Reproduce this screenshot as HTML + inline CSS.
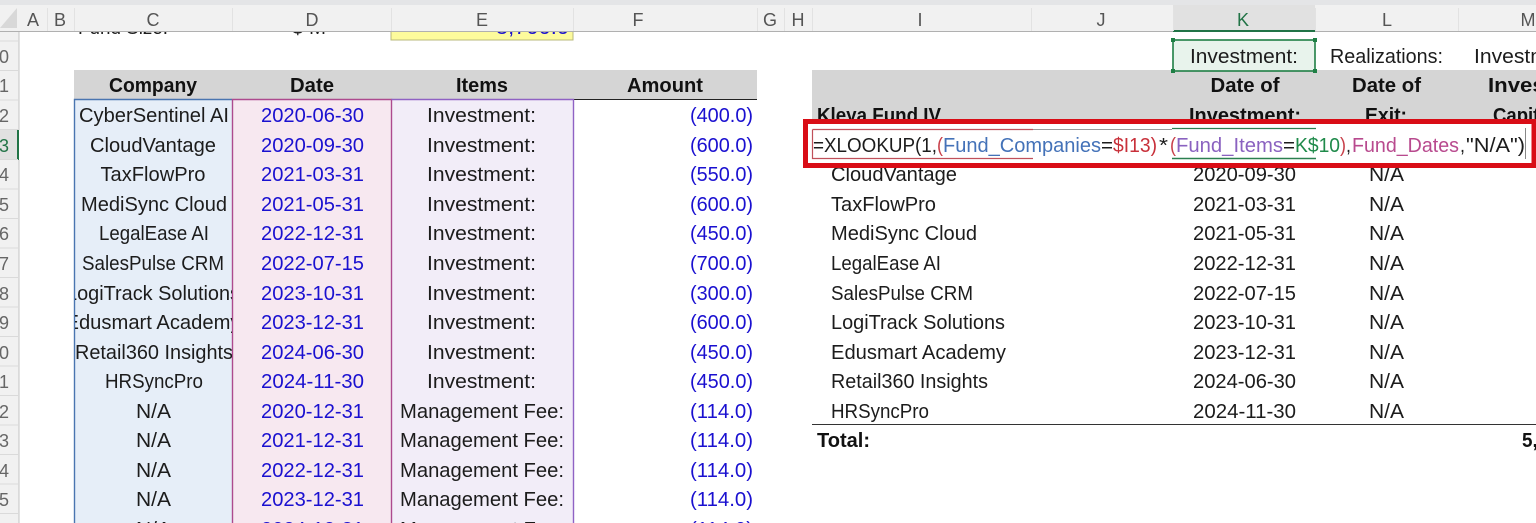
<!DOCTYPE html>
<html><head><meta charset="utf-8"><style>
html,body{margin:0;padding:0;background:#fff;overflow:hidden}
svg{display:block;filter:blur(.3px)}
text{font-family:"Liberation Sans",sans-serif;font-size:20px;fill:#1c1c1c}
.m{text-anchor:middle}.e{text-anchor:end}
.b{font-weight:bold;fill:#111}
.u{fill:#1a10d0}
.h{font-size:18px;fill:#555}
.r{fill:#666;font-size:18px}
</style></head><body>
<svg xmlns="http://www.w3.org/2000/svg" width="1536" height="523" viewBox="0 0 1536 523">
<defs><clipPath id="cc"><rect x="75" y="100" width="157" height="423"/></clipPath></defs>
<rect width="1536" height="523" fill="#fff"/>

<!-- partial row 9 -->
<text x="78" y="34" textLength="90" lengthAdjust="spacingAndGlyphs">Fund Size:</text>
<text x="292" y="34" textLength="34" lengthAdjust="spacingAndGlyphs">$ M</text>
<rect x="391" y="20" width="182" height="20" fill="#fdfb9c" stroke="#b9b97c"/>
<text class="e u" x="569" y="34" textLength="73" lengthAdjust="spacingAndGlyphs">5,700.0</text>

<!-- left table fills -->
<rect x="74" y="70" width="683" height="29" fill="#d5d5d5"/>
<rect x="74" y="99" width="158" height="424" fill="#e6eef8"/>
<rect x="232" y="99" width="159" height="424" fill="#f7e8f0"/>
<rect x="391" y="99" width="182" height="424" fill="#f2edf8"/>
<rect x="74" y="99" width="683" height="1" fill="#222"/>
<path d="M74.5 523V99.5H232" fill="none" stroke="#4a75b0" stroke-width="1.4"/>
<path d="M232.5 523V99.5H391.5V523" fill="none" stroke="#ad4a8e" stroke-width="1.4"/>
<path d="M391.5 99.5H573.5V523" fill="none" stroke="#8f62c4" stroke-width="1.4"/>

<text class="m b" x="153" y="92" textLength="88" lengthAdjust="spacingAndGlyphs">Company</text>
<text class="m b" x="312" y="92" textLength="44" lengthAdjust="spacingAndGlyphs">Date</text>
<text class="m b" x="482" y="92" textLength="52" lengthAdjust="spacingAndGlyphs">Items</text>
<text class="m b" x="665" y="92" textLength="76" lengthAdjust="spacingAndGlyphs">Amount</text>

<g clip-path="url(#cc)">
<text class="m" x="154" y="122" textLength="150" lengthAdjust="spacingAndGlyphs">CyberSentinel AI</text>
<text class="m" x="153" y="152" textLength="126" lengthAdjust="spacingAndGlyphs">CloudVantage</text>
<text class="m" x="153" y="181" textLength="105" lengthAdjust="spacingAndGlyphs">TaxFlowPro</text>
<text class="m" x="154" y="211" textLength="146" lengthAdjust="spacingAndGlyphs">MediSync Cloud</text>
<text class="m" x="154" y="240" textLength="110" lengthAdjust="spacingAndGlyphs">LegalEase AI</text>
<text class="m" x="153" y="270" textLength="142" lengthAdjust="spacingAndGlyphs">SalesPulse CRM</text>
<text class="m" x="153" y="300" textLength="174" lengthAdjust="spacingAndGlyphs">LogiTrack Solutions</text>
<text class="m" x="153" y="329" textLength="175" lengthAdjust="spacingAndGlyphs">Edusmart Academy</text>
<text class="m" x="154" y="359" textLength="158" lengthAdjust="spacingAndGlyphs">Retail360 Insights</text>
<text class="m" x="154" y="388" textLength="98" lengthAdjust="spacingAndGlyphs">HRSyncPro</text>
<text class="m" x="153.500" y="418" textLength="35" lengthAdjust="spacingAndGlyphs">N/A</text>
<text class="m" x="153.500" y="447" textLength="35" lengthAdjust="spacingAndGlyphs">N/A</text>
<text class="m" x="153.500" y="477" textLength="35" lengthAdjust="spacingAndGlyphs">N/A</text>
<text class="m" x="153.500" y="506" textLength="35" lengthAdjust="spacingAndGlyphs">N/A</text>
<text class="m" x="153.500" y="536" textLength="35" lengthAdjust="spacingAndGlyphs">N/A</text>
</g>

<g class="dates">
<text class="m u" x="312.500" y="122" textLength="103" lengthAdjust="spacingAndGlyphs">2020-06-30</text>
<text class="m u" x="312.500" y="152" textLength="103" lengthAdjust="spacingAndGlyphs">2020-09-30</text>
<text class="m u" x="312.500" y="181" textLength="103" lengthAdjust="spacingAndGlyphs">2021-03-31</text>
<text class="m u" x="312.500" y="211" textLength="103" lengthAdjust="spacingAndGlyphs">2021-05-31</text>
<text class="m u" x="312.500" y="240" textLength="103" lengthAdjust="spacingAndGlyphs">2022-12-31</text>
<text class="m u" x="312.500" y="270" textLength="103" lengthAdjust="spacingAndGlyphs">2022-07-15</text>
<text class="m u" x="312.500" y="300" textLength="103" lengthAdjust="spacingAndGlyphs">2023-10-31</text>
<text class="m u" x="312.500" y="329" textLength="103" lengthAdjust="spacingAndGlyphs">2023-12-31</text>
<text class="m u" x="312.500" y="359" textLength="103" lengthAdjust="spacingAndGlyphs">2024-06-30</text>
<text class="m u" x="312.500" y="388" textLength="103" lengthAdjust="spacingAndGlyphs">2024-11-30</text>
<text class="m u" x="312.500" y="418" textLength="103" lengthAdjust="spacingAndGlyphs">2020-12-31</text>
<text class="m u" x="312.500" y="447" textLength="103" lengthAdjust="spacingAndGlyphs">2021-12-31</text>
<text class="m u" x="312.500" y="477" textLength="103" lengthAdjust="spacingAndGlyphs">2022-12-31</text>
<text class="m u" x="312.500" y="506" textLength="103" lengthAdjust="spacingAndGlyphs">2023-12-31</text>
<text class="m u" x="312.500" y="536" textLength="103" lengthAdjust="spacingAndGlyphs">2024-12-31</text>
</g>

<g>
<text class="m" x="481.500" y="122" textLength="109" lengthAdjust="spacingAndGlyphs">Investment:</text>
<text class="m" x="481.500" y="152" textLength="109" lengthAdjust="spacingAndGlyphs">Investment:</text>
<text class="m" x="481.500" y="181" textLength="109" lengthAdjust="spacingAndGlyphs">Investment:</text>
<text class="m" x="481.500" y="211" textLength="109" lengthAdjust="spacingAndGlyphs">Investment:</text>
<text class="m" x="481.500" y="240" textLength="109" lengthAdjust="spacingAndGlyphs">Investment:</text>
<text class="m" x="481.500" y="270" textLength="109" lengthAdjust="spacingAndGlyphs">Investment:</text>
<text class="m" x="481.500" y="300" textLength="109" lengthAdjust="spacingAndGlyphs">Investment:</text>
<text class="m" x="481.500" y="329" textLength="109" lengthAdjust="spacingAndGlyphs">Investment:</text>
<text class="m" x="481.500" y="359" textLength="109" lengthAdjust="spacingAndGlyphs">Investment:</text>
<text class="m" x="481.500" y="388" textLength="109" lengthAdjust="spacingAndGlyphs">Investment:</text>
<text class="m" x="482" y="418" textLength="164" lengthAdjust="spacingAndGlyphs">Management Fee:</text>
<text class="m" x="482" y="447" textLength="164" lengthAdjust="spacingAndGlyphs">Management Fee:</text>
<text class="m" x="482" y="477" textLength="164" lengthAdjust="spacingAndGlyphs">Management Fee:</text>
<text class="m" x="482" y="506" textLength="164" lengthAdjust="spacingAndGlyphs">Management Fee:</text>
<text class="m" x="482" y="536" textLength="164" lengthAdjust="spacingAndGlyphs">Management Fee:</text>
</g>

<g>
<text class="e u" x="753" y="122" textLength="63" lengthAdjust="spacingAndGlyphs">(400.0)</text>
<text class="e u" x="753" y="152" textLength="63" lengthAdjust="spacingAndGlyphs">(600.0)</text>
<text class="e u" x="753" y="181" textLength="63" lengthAdjust="spacingAndGlyphs">(550.0)</text>
<text class="e u" x="753" y="211" textLength="63" lengthAdjust="spacingAndGlyphs">(600.0)</text>
<text class="e u" x="753" y="240" textLength="63" lengthAdjust="spacingAndGlyphs">(450.0)</text>
<text class="e u" x="753" y="270" textLength="63" lengthAdjust="spacingAndGlyphs">(700.0)</text>
<text class="e u" x="753" y="300" textLength="63" lengthAdjust="spacingAndGlyphs">(300.0)</text>
<text class="e u" x="753" y="329" textLength="63" lengthAdjust="spacingAndGlyphs">(600.0)</text>
<text class="e u" x="753" y="359" textLength="63" lengthAdjust="spacingAndGlyphs">(450.0)</text>
<text class="e u" x="753" y="388" textLength="63" lengthAdjust="spacingAndGlyphs">(450.0)</text>
<text class="e u" x="753" y="418" textLength="63" lengthAdjust="spacingAndGlyphs">(114.0)</text>
<text class="e u" x="753" y="447" textLength="63" lengthAdjust="spacingAndGlyphs">(114.0)</text>
<text class="e u" x="753" y="477" textLength="63" lengthAdjust="spacingAndGlyphs">(114.0)</text>
<text class="e u" x="753" y="506" textLength="63" lengthAdjust="spacingAndGlyphs">(114.0)</text>
<text class="e u" x="753" y="536" textLength="63" lengthAdjust="spacingAndGlyphs">(114.0)</text>
</g>

<!-- right table -->
<rect x="812" y="70" width="724" height="60" fill="#d5d5d5"/>
<rect x="1173" y="40" width="142" height="31" fill="#e8f3ec" stroke="#1f7f45" stroke-width="1.6"/>
<rect x="1171" y="38" width="4" height="4" fill="#1f7f45"/><rect x="1313" y="38" width="4" height="4" fill="#1f7f45"/>
<rect x="1171" y="69" width="4" height="4" fill="#1f7f45"/><rect x="1313" y="69" width="4" height="4" fill="#1f7f45"/>
<text class="m" x="1244" y="63" textLength="108" lengthAdjust="spacingAndGlyphs">Investment:</text>
<text x="1330" y="63" textLength="113" lengthAdjust="spacingAndGlyphs">Realizations:</text>
<text x="1474" y="63" textLength="109" lengthAdjust="spacingAndGlyphs">Investment:</text>

<text class="m b" x="1245" y="92" textLength="69" lengthAdjust="spacingAndGlyphs">Date of</text>
<text class="m b" x="1386.500" y="92" textLength="69" lengthAdjust="spacingAndGlyphs">Date of</text>
<text class="b" x="1488" y="92" textLength="90" lengthAdjust="spacingAndGlyphs">Invested</text>
<text class="b" x="817" y="122" textLength="124" lengthAdjust="spacingAndGlyphs">Kleya Fund IV</text>
<text class="m b" x="1245" y="122" textLength="112" lengthAdjust="spacingAndGlyphs">Investment:</text>
<text class="m b" x="1386" y="122" textLength="42" lengthAdjust="spacingAndGlyphs">Exit:</text>
<text class="b" x="1493" y="122" textLength="68" lengthAdjust="spacingAndGlyphs">Capital:</text>

<text x="831" y="181" textLength="126" lengthAdjust="spacingAndGlyphs">CloudVantage</text>
<text x="831" y="211" textLength="105" lengthAdjust="spacingAndGlyphs">TaxFlowPro</text>
<text x="831" y="240" textLength="146" lengthAdjust="spacingAndGlyphs">MediSync Cloud</text>
<text x="831" y="270" textLength="110" lengthAdjust="spacingAndGlyphs">LegalEase AI</text>
<text x="831" y="300" textLength="142" lengthAdjust="spacingAndGlyphs">SalesPulse CRM</text>
<text x="831" y="329" textLength="174" lengthAdjust="spacingAndGlyphs">LogiTrack Solutions</text>
<text x="831" y="359" textLength="175" lengthAdjust="spacingAndGlyphs">Edusmart Academy</text>
<text x="831" y="388" textLength="157" lengthAdjust="spacingAndGlyphs">Retail360 Insights</text>
<text x="831" y="418" textLength="98" lengthAdjust="spacingAndGlyphs">HRSyncPro</text>
<text class="m" x="1244.500" y="181" textLength="103" lengthAdjust="spacingAndGlyphs">2020-09-30</text>
<text class="m" x="1244.500" y="211" textLength="103" lengthAdjust="spacingAndGlyphs">2021-03-31</text>
<text class="m" x="1244.500" y="240" textLength="103" lengthAdjust="spacingAndGlyphs">2021-05-31</text>
<text class="m" x="1244.500" y="270" textLength="103" lengthAdjust="spacingAndGlyphs">2022-12-31</text>
<text class="m" x="1244.500" y="300" textLength="103" lengthAdjust="spacingAndGlyphs">2022-07-15</text>
<text class="m" x="1244.500" y="329" textLength="103" lengthAdjust="spacingAndGlyphs">2023-10-31</text>
<text class="m" x="1244.500" y="359" textLength="103" lengthAdjust="spacingAndGlyphs">2023-12-31</text>
<text class="m" x="1244.500" y="388" textLength="103" lengthAdjust="spacingAndGlyphs">2024-06-30</text>
<text class="m" x="1244.500" y="418" textLength="103" lengthAdjust="spacingAndGlyphs">2024-11-30</text>
<text class="m" x="1386.500" y="181" textLength="35" lengthAdjust="spacingAndGlyphs">N/A</text>
<text class="m" x="1386.500" y="211" textLength="35" lengthAdjust="spacingAndGlyphs">N/A</text>
<text class="m" x="1386.500" y="240" textLength="35" lengthAdjust="spacingAndGlyphs">N/A</text>
<text class="m" x="1386.500" y="270" textLength="35" lengthAdjust="spacingAndGlyphs">N/A</text>
<text class="m" x="1386.500" y="300" textLength="35" lengthAdjust="spacingAndGlyphs">N/A</text>
<text class="m" x="1386.500" y="329" textLength="35" lengthAdjust="spacingAndGlyphs">N/A</text>
<text class="m" x="1386.500" y="359" textLength="35" lengthAdjust="spacingAndGlyphs">N/A</text>
<text class="m" x="1386.500" y="388" textLength="35" lengthAdjust="spacingAndGlyphs">N/A</text>
<text class="m" x="1386.500" y="418" textLength="35" lengthAdjust="spacingAndGlyphs">N/A</text>
<rect x="812" y="424" width="724" height="1" fill="#333"/>
<text class="b" x="817" y="447" textLength="53" lengthAdjust="spacingAndGlyphs">Total:</text>
<text class="b" x="1522" y="447" textLength="63" lengthAdjust="spacingAndGlyphs">5,700.0</text>

<!-- formula box -->
<rect x="805.500" y="121.500" width="728.500" height="44" fill="#fff" stroke="#d90d16" stroke-width="5"/>
<path d="M812.500 129.500H1033M812.500 129.500V158.500H1033" fill="none" stroke="#c0505a" stroke-width="1.200"/>
<path d="M1033 129.500H1172" stroke="#999" stroke-width="1"/>
<path d="M1172 128.500H1316" stroke="#2b8050" stroke-width="1.200"/>
<path d="M1172 158.500H1316" stroke="#2b8050" stroke-width="1.400"/>
<path d="M1525.500 128V159" stroke="#888" stroke-width="1"/>
<text x="813" y="152" textLength="124" lengthAdjust="spacingAndGlyphs">=XLOOKUP(1,</text>
<text x="937" y="152" textLength="6" lengthAdjust="spacingAndGlyphs" style="fill:#c8404a">(</text>
<text x="943" y="152" textLength="158" lengthAdjust="spacingAndGlyphs" style="fill:#4472b8">Fund_Companies</text>
<text x="1101" y="152" textLength="12" lengthAdjust="spacingAndGlyphs">=</text>
<text x="1113" y="152" textLength="44" lengthAdjust="spacingAndGlyphs" style="fill:#c8303a">$I13)</text>
<text x="1159" y="152" textLength="9" lengthAdjust="spacingAndGlyphs">*</text>
<text x="1170" y="152" textLength="6" lengthAdjust="spacingAndGlyphs" style="fill:#c8404a">(</text>
<text x="1176" y="152" textLength="107" lengthAdjust="spacingAndGlyphs" style="fill:#8a62c0">Fund_Items</text>
<text x="1283" y="152" textLength="12" lengthAdjust="spacingAndGlyphs">=</text>
<text x="1295" y="152" textLength="45" lengthAdjust="spacingAndGlyphs" style="fill:#1f8a4a">K$10</text>
<text x="1340" y="152" textLength="6" lengthAdjust="spacingAndGlyphs" style="fill:#c8404a">)</text>
<text x="1346" y="152" textLength="5" lengthAdjust="spacingAndGlyphs">,</text>
<text x="1352" y="152" textLength="107" lengthAdjust="spacingAndGlyphs" style="fill:#b84a8e">Fund_Dates</text>
<text x="1460" y="152" textLength="5" lengthAdjust="spacingAndGlyphs">,</text>
<text x="1466" y="152" textLength="59" lengthAdjust="spacingAndGlyphs">"N/A")</text>

<!-- column header -->
<rect x="0" y="0" width="1536" height="5" fill="#e4e5e7"/>
<rect x="0" y="5" width="1536" height="26" fill="#f1f1f1"/>
<rect x="1173" y="5" width="142" height="26" fill="#e1e1e1"/>
<rect x="0" y="31" width="1536" height="1" fill="#b0b0b0"/>
<rect x="1173" y="30" width="142" height="2" fill="#217346"/>
<path d="M47.500 8V31M74.500 8V31M232.500 8V31M391.500 8V31M573.500 8V31M757.500 8V31M784.500 8V31M812.500 8V31M1031.500 8V31M1173.500 8V31M1315.500 8V31M1458.500 8V31" stroke="#e2e2e2" stroke-width="1"/>
<text class="m h" x="33" y="26">A</text><text class="m h" x="60" y="26">B</text>
<text class="m h" x="153" y="26">C</text><text class="m h" x="312" y="26">D</text>
<text class="m h" x="482" y="26">E</text><text class="m h" x="638" y="26">F</text>
<text class="m h" x="770" y="26">G</text><text class="m h" x="798" y="26">H</text>
<text class="m h" x="920" y="26">I</text><text class="m h" x="1101" y="26">J</text>
<text class="m h" x="1243" y="26" style="fill:#217346">K</text><text class="m h" x="1387" y="26">L</text>
<text class="m h" x="1528" y="26">M</text>
<path d="M0 28L17 8V28Z" fill="#d8d8d8"/>

<!-- row header -->
<rect x="0" y="32" width="19" height="491" fill="#f1f1f1"/>
<rect x="0" y="130" width="18" height="30" fill="#e1e1e1"/>
<rect x="17" y="130" width="2" height="30" fill="#217346"/>
<rect x="18.500" y="32" width="1" height="98" fill="#c4c4c4"/>
<rect x="18.500" y="160" width="1" height="363" fill="#c4c4c4"/>
<path d="M0 41H18M0 70.500H18M0 100H18M0 129.500H18M0 159.500H18M0 189H18M0 218.500H18M0 248H18M0 277.500H18M0 307H18M0 336.500H18M0 366H18M0 395.500H18M0 425H18M0 454.500H18M0 484H18M0 513.500H18" stroke="#dadada" stroke-width="1"/>
<text class="r e" x="9" y="63">0</text>
<text class="r e" x="9" y="92">1</text>
<text class="r e" x="9" y="122">2</text>
<text class="r e" x="9" y="152" style="fill:#217346">3</text>
<text class="r e" x="9" y="181">4</text>
<text class="r e" x="9" y="211">5</text>
<text class="r e" x="9" y="240">6</text>
<text class="r e" x="9" y="270">7</text>
<text class="r e" x="9" y="300">8</text>
<text class="r e" x="9" y="329">9</text>
<text class="r e" x="9" y="359">0</text>
<text class="r e" x="9" y="388">1</text>
<text class="r e" x="9" y="418">2</text>
<text class="r e" x="9" y="447">3</text>
<text class="r e" x="9" y="477">4</text>
<text class="r e" x="9" y="506">5</text>
</svg>
</body></html>
